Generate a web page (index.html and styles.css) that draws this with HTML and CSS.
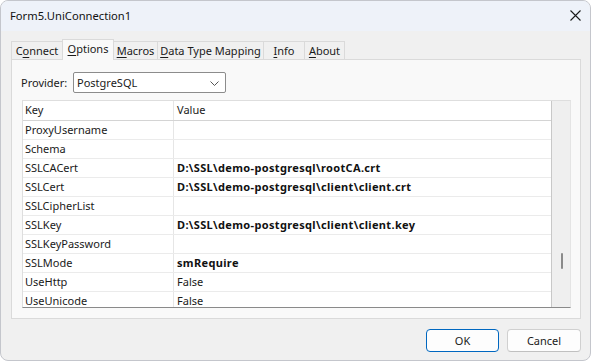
FILE: index.html
```html
<!DOCTYPE html>
<html>
<head>
<meta charset="utf-8">
<link rel="stylesheet" href="styles.css">
</head>
<body>
<div class="window">
  <div class="titlebar">
    <span class="title">Form5.UniConnection1</span>
    <svg class="close" width="11" height="11" viewBox="0 0 11 11"><path d="M0.5 0.5 L10.5 10.5 M10.5 0.5 L0.5 10.5" stroke="#1a1a1a" stroke-width="1.1" fill="none"/></svg>
  </div>
  <div class="client">
    <div class="tabs">
      <div class="tab t-connect">C<u>o</u>nnect</div>
      <div class="tab active t-options"><u>O</u>ptions</div>
      <div class="tab t-macros"><u>M</u>acros</div>
      <div class="tab t-dtm"><u>D</u>ata Type Mapping</div>
      <div class="tab t-info"><u>I</u>nfo</div>
      <div class="tab t-about"><u>A</u>bout</div>
    </div>
    <div class="panel">
      <div class="provider-row">
        <span class="provider-label">Provider:</span>
        <div class="combo">
          <span>PostgreSQL</span>
          <svg class="chevron" width="9" height="5" viewBox="0 0 9 5"><path d="M0.5 0.5 L4.5 4.5 L8.5 0.5" stroke="#555" stroke-width="1" fill="none"/></svg>
        </div>
      </div>
      <div class="grid">
        <div class="grid-body">
          <div class="row header"><div class="cell key">Key</div><div class="cell val">Value</div></div>
          <div class="row"><div class="cell key">ProxyUsername</div><div class="cell val"></div></div>
          <div class="row"><div class="cell key">Schema</div><div class="cell val"></div></div>
          <div class="row"><div class="cell key">SSLCACert</div><div class="cell val bold">D:\SSL\demo-postgresql\rootCA.crt</div></div>
          <div class="row"><div class="cell key">SSLCert</div><div class="cell val bold">D:\SSL\demo-postgresql\client\client.crt</div></div>
          <div class="row"><div class="cell key">SSLCipherList</div><div class="cell val"></div></div>
          <div class="row"><div class="cell key">SSLKey</div><div class="cell val bold">D:\SSL\demo-postgresql\client\client.key</div></div>
          <div class="row"><div class="cell key">SSLKeyPassword</div><div class="cell val"></div></div>
          <div class="row"><div class="cell key">SSLMode</div><div class="cell val bold">smRequire</div></div>
          <div class="row"><div class="cell key">UseHttp</div><div class="cell val">False</div></div>
          <div class="row"><div class="cell key">UseUnicode</div><div class="cell val">False</div></div>
        </div>
        <div class="scrollbar"><div class="thumb"></div></div>
      </div>
    </div>
    <div class="buttons">
      <button class="btn default">OK</button>
      <button class="btn">Cancel</button>
    </div>
  </div>
</div>
</body>
</html>
```
FILE: styles.css
```css
html, body {
  margin: 0;
  padding: 0;
  background: #ffffff;
}
body {
  font-family: "Noto Sans", "Liberation Sans", sans-serif;
  font-size: 11px;
  color: #1a1a1a;
}
.window {
  width: 591px;
  height: 361px;
  box-sizing: border-box;
  border: 1px solid #c4c6cc;
  border-radius: 8px;
  overflow: hidden;
  background: #f0f0f0;
  display: flex;
  flex-direction: column;
}
.titlebar {
  height: 30px;
  flex: none;
  background: #eef2f9;
  display: flex;
  align-items: center;
  justify-content: space-between;
  padding: 0 9px 1px 9px;
  box-sizing: border-box;
  font-size: 11.2px;
  color: #111;
}
.client {
  flex: 1;
  display: flex;
  flex-direction: column;
  padding: 8px 9px 0 10px;
}
.tabs {
  display: flex;
  align-items: flex-end;
  height: 20px;
  position: relative;
  z-index: 1;
}
.tab {
  box-sizing: border-box;
  height: 18px;
  border: 1px solid #dadada;
  border-bottom: none;
  margin-right: -1px;
  background: #f0f0f0;
  text-align: center;
  line-height: 17px;
  color: #1a1a1a;
  white-space: nowrap;
}
.tab u {
  text-decoration-thickness: 1px;
  text-underline-offset: 2px;
}
.tab.active {
  height: 21px;
  margin-bottom: -1px;
  background: #f9f9f9;
  line-height: 18px;
}
.t-connect { width: 52px; }
.t-options { width: 52px; }
.t-macros { width: 45px; }
.t-dtm { width: 107px; }
.t-info { width: 42px; }
.t-about { width: 41px; }
.panel {
  height: 260px;
  box-sizing: border-box;
  border: 1px solid #dadada;
  background: #f9f9f9;
  padding: 12px 9px 10px 10px;
  display: flex;
  flex-direction: column;
}
.provider-row {
  display: flex;
  align-items: center;
  height: 21px;
}
.provider-label {
  width: 52px;
  margin-left: -1px;
  color: #1a1a1a;
}
.combo {
  width: 153px;
  height: 21px;
  box-sizing: border-box;
  border: 1px solid #8c8c8c;
  border-radius: 2px;
  background: #ffffff;
  display: flex;
  align-items: center;
  justify-content: space-between;
  padding: 0 6px 0 3px;
}
.chevron {
  margin-top: 1px;
}
.grid {
  margin-top: 7px;
  height: 208px;
  box-sizing: border-box;
  border-top: 1px solid #dedede;
  border-left: 1px solid #dedede;
  border-right: 1px solid #e4e4e4;
  border-bottom: 1px solid #8a8a8a;
  display: flex;
  overflow: hidden;
  background: #ffffff;
}
.grid-body {
  width: 528px;
  flex: none;
  overflow: hidden;
}
.row {
  display: flex;
  height: 19px;
  box-sizing: border-box;
  border-bottom: 1px solid #ebebeb;
  flex: none;
}
.row.header {
  height: 20px;
  border-bottom: 1px solid #d4d4d4;
}
.cell {
  line-height: 18px;
  white-space: nowrap;
  overflow: hidden;
  box-sizing: border-box;
}
.cell.key {
  width: 151px;
  border-right: 1px solid #e6e6e6;
  padding-left: 2px;
}
.cell.val {
  flex: 1;
  padding-left: 3px;
}
.cell.bold {
  font-weight: bold;
  font-size: 11px;
  letter-spacing: 0.35px;
  color: #111;
}
.scrollbar {
  flex: 1;
  border-left: 1px solid #c8c8c8;
  background: #efefef;
  display: flex;
  flex-direction: column;
  align-items: center;
}
.thumb {
  width: 2px;
  height: 16px;
  margin-top: 152px;
  margin-left: 1px;
  background: #8a8a8a;
  border-radius: 1px;
}
.buttons {
  display: flex;
  justify-content: flex-end;
  gap: 8px;
  margin-top: 10px;
}
.btn {
  font-family: "Noto Sans", "Liberation Sans", sans-serif;
  font-size: 11px;
  color: #1a1a1a;
  height: 23px;
  width: 74px;
  box-sizing: border-box;
  border: 1px solid #d0d0d0;
  border-bottom-color: #c0c0c0;
  border-radius: 4px;
  background: #fdfdfd;
  padding: 0;
}
.btn.default {
  width: 73px;
  border: 1px solid #0067c0;
}
```
